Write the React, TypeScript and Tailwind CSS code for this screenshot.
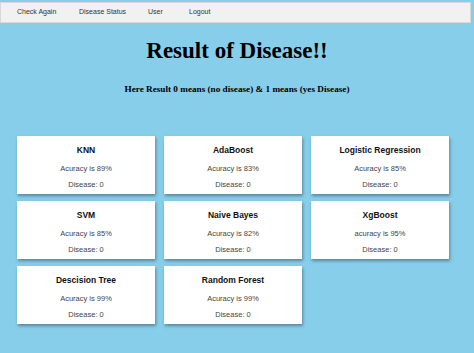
const models = [
  { name: 'KNN', acc: 'Acuracy is 89%' },
  { name: 'AdaBoost', acc: 'Acuracy is 83%' },
  { name: 'Logistic Regression', acc: 'Acuracy is 85%' },
  { name: 'SVM', acc: 'Acuracy is 85%' },
  { name: 'Naive Bayes', acc: 'Acuracy is 82%' },
  { name: 'XgBoost', acc: 'acuracy is 95%' },
  { name: 'Descision Tree', acc: 'Acuracy is 99%' },
  { name: 'Random Forest', acc: 'Acuracy is 99%' },
]

export default function App() {
  return (
    <div className="w-[474px] h-[353px] bg-[#87ceeb] overflow-hidden pt-[2px] font-['Liberation_Sans',Arial,sans-serif]">
      {/* nav */}
      <nav className="h-[21px] w-[471px] bg-[#f1f1f1] border border-[#d8d8d8] flex items-center pl-[16px] text-[7px] text-[#333]">
        <span className="w-[62px]">Check Again</span>
        <span className="w-[69px]">Disease Status</span>
        <span className="w-[41px]">User</span>
        <span>Logout</span>
      </nav>

      <h1 className="text-center font-['Liberation_Serif',serif] font-bold text-[23px] leading-none mt-[16px] text-black">
        Result of Disease!!
      </h1>
      <p className="text-center font-['Liberation_Serif',serif] font-bold text-[9.2px] mt-[21px] text-black">
        Here Result 0 means (no disease) &amp; 1 means (yes Disease)
      </p>

      <div className="grid grid-cols-[138px_138px_138px] gap-x-[9px] gap-y-[7px] pl-[17px] mt-[39px]">
        {models.map(m => (
          <div key={m.name} className="bg-white h-[58px] shadow-[1px_2px_3px_rgba(0,0,0,0.35)] flex flex-col items-center pt-[10px] text-[7.5px] text-[#444]">
            <div className="font-bold text-[8.5px] text-[#111] leading-none">{m.name}</div>
            <div className="mt-[11px] leading-none">{m.acc}</div>
            <div className="mt-[8px] leading-none">Disease: 0</div>
          </div>
        ))}
      </div>
    </div>
  )
}
